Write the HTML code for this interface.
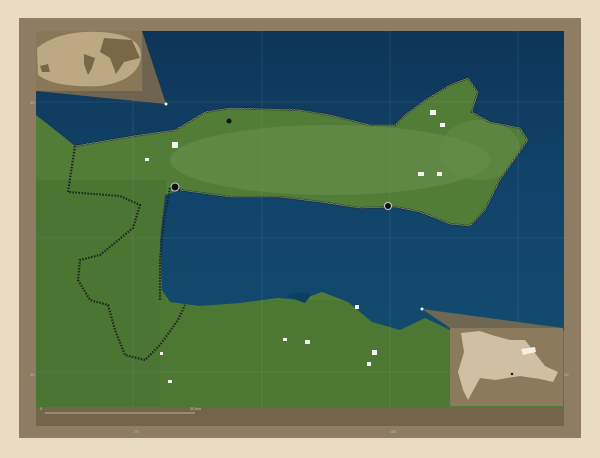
<!DOCTYPE html>
<html><head><style>
html,body{margin:0;padding:0;background:#e9dcc3;width:600px;height:458px;overflow:hidden;font-family:"Liberation Sans",sans-serif}
</style></head><body>
<svg width="600" height="458" viewBox="0 0 600 458" xmlns="http://www.w3.org/2000/svg">
<defs>
<linearGradient id="sea" x1="0" y1="0" x2="0" y2="1"><stop offset="0" stop-color="#0e3557"/><stop offset="0.5" stop-color="#114369"/><stop offset="1" stop-color="#124a6e"/></linearGradient>
</defs>
<rect x="0" y="0" width="600" height="458" fill="#e9dcc3"/>
<rect x="19" y="18" width="562" height="420" fill="#8e7d62"/>
<!-- land base -->
<rect x="36" y="31" width="528" height="376" fill="#527d37"/>
<rect x="36" y="180" width="130" height="227" fill="#4a7532"/>
<rect x="160" y="300" width="290" height="107" fill="#4d7833"/>
<ellipse cx="330" cy="160" rx="160" ry="35" fill="#6a9150" opacity="0.55"/>
<ellipse cx="480" cy="150" rx="40" ry="30" fill="#6a9150" opacity="0.4"/>
<!-- sea -->
<path fill="url(#sea)" d="M36,31 L564,31 L564,330 L450,330 L425,318 L400,330 L372,322 L348,302 L322,292 L300,300 L278,298 L240,303 L200,306 L170,302 L162,290 L160,240 L165,195 L180,190 L230,197 L280,197 L320,202 L360,208 L395,207 L420,212 L450,224 L470,226 L485,210 L500,180 L528,140 L520,128 L490,122 L472,112 L478,92 L468,78 L450,85 L425,100 L405,115 L395,125 L370,125 L330,115 L300,110 L230,108 L205,112 L175,130 L140,135 L110,140 L75,146 L55,130 L36,115 Z"/>
<path fill="#0d3f62" d="M285,296 Q300,290 312,294 L305,303 Z"/>
<!-- grid -->
<g stroke="#8fb0c8" stroke-opacity="0.25" stroke-width="0.6">
<line x1="36" y1="102" x2="564" y2="102"/><line x1="36" y1="238" x2="564" y2="238"/><line x1="36" y1="372" x2="564" y2="372"/>
<line x1="133" y1="31" x2="133" y2="407"/><line x1="262" y1="31" x2="262" y2="407"/><line x1="390" y1="31" x2="390" y2="407"/><line x1="518" y1="31" x2="518" y2="407"/>
</g>
<!-- borders dotted -->
<g fill="none" stroke="#222" stroke-width="2.2" stroke-dasharray="1.5 1.5">
<path d="M75,146 L110,140 L140,135 L175,130 L205,112 L230,108 L300,110 L330,115 L370,125 L395,125 L405,115 L425,100 L450,85 L468,78 L478,92 L472,112 L490,122 L520,128 L528,140 L500,180 L485,210 L470,226 L450,224 L420,212 L395,207 L360,208 L320,202 L280,197 L230,197 L180,190 L170,188"/>
<path d="M75,146 L68,192 L120,196 L140,205 L133,228 L100,255 L80,260 L78,280 L90,300 L108,305 L115,330 L125,355 L145,360 L160,345 L178,320 L185,305"/>
<path d="M170,188 L164,220 L160,260 L160,300"/>
</g>
<g fill="none" stroke="#fff" stroke-width="0.6" stroke-dasharray="1.5 1.5" opacity="0.7">
<path d="M75,146 L110,140 L140,135 L175,130 L205,112 L230,108 L300,110 L330,115 L370,125 L395,125 L405,115 L425,100 L450,85 L468,78 L478,92 L472,112 L490,122 L520,128 L528,140 L500,180 L485,210 L470,226 L450,224 L420,212 L395,207 L360,208 L320,202 L280,197 L230,197 L180,190"/>
</g>
<!-- clouds -->
<g fill="#f2f2ee">
<rect x="172" y="142" width="6" height="6"/><rect x="145" y="158" width="4" height="3"/><rect x="430" y="110" width="6" height="5"/><rect x="440" y="123" width="5" height="4"/><rect x="418" y="172" width="6" height="4"/><rect x="437" y="172" width="5" height="4"/>
<rect x="355" y="305" width="4" height="4"/><rect x="305" y="340" width="5" height="4"/><rect x="372" y="350" width="5" height="5"/><rect x="367" y="362" width="4" height="4"/><rect x="160" y="352" width="3" height="3"/><rect x="168" y="380" width="4" height="3"/><rect x="283" y="338" width="4" height="3"/>
</g>
<!-- cities -->
<circle cx="175" cy="187" r="4" fill="#111" stroke="#ccc" stroke-width="1"/>
<circle cx="229" cy="121" r="2.5" fill="#111"/>
<circle cx="388" cy="206" r="3.5" fill="#111" stroke="#ccc" stroke-width="1"/>
<!-- world inset -->
<polygon points="36,31 142,31 166,104 36,91" fill="#7f6c4d" opacity="0.85"/>
<rect x="36" y="31" width="106" height="60" fill="#8a7758"/>
<path d="M37,48 Q60,30 100,32 Q140,34 141,55 Q140,80 100,86 Q55,88 38,75 Z" fill="#bca984"/>
<g fill="#7a6748"><path d="M84,54 L95,58 L92,68 L88,75 L84,64 Z"/><path d="M104,38 L132,40 L140,58 L124,62 L116,74 L110,58 L100,52 Z"/><path d="M40,66 L48,64 L50,72 L42,72 Z"/></g>
<circle cx="166" cy="104" r="1.5" fill="#eee"/>
<!-- DR inset -->
<polygon points="422,309 563,328 563,406 450,406 450,328" fill="#7f6c4d" opacity="0.85"/>
<rect x="450" y="328" width="113" height="78" fill="#8b7a5c"/>
<path d="M461,333 L480,331 L495,336 L510,340 L525,340 L545,366 L558,372 L553,382 L540,379 L520,376 L495,380 L480,378 L468,400 L463,390 L458,372 L464,352 Z" fill="#cfc0a3"/>
<path d="M521,349 L535,347 L536,352 L523,355 Z" fill="#f5efe2"/>
<circle cx="512" cy="374" r="1.3" fill="#222"/>
<circle cx="422" cy="309" r="1.5" fill="#eee"/>
<!-- scale strip -->
<rect x="36" y="407" width="528" height="19" fill="#74644a"/>
<line x1="45" y1="413" x2="195" y2="413" stroke="#d8ccb0" stroke-width="0.8"/>
<g font-size="4" fill="#d8ccb0"><text x="40" y="410">0</text><text x="190" y="410">20 km</text></g>
<g font-size="4" fill="#cdbf9f"><text x="564" y="376">19</text><text x="30" y="376">19</text><text x="30" y="104">20</text><text x="133" y="433">-70</text><text x="390" y="433">-69</text></g>
</svg>
</body></html>
